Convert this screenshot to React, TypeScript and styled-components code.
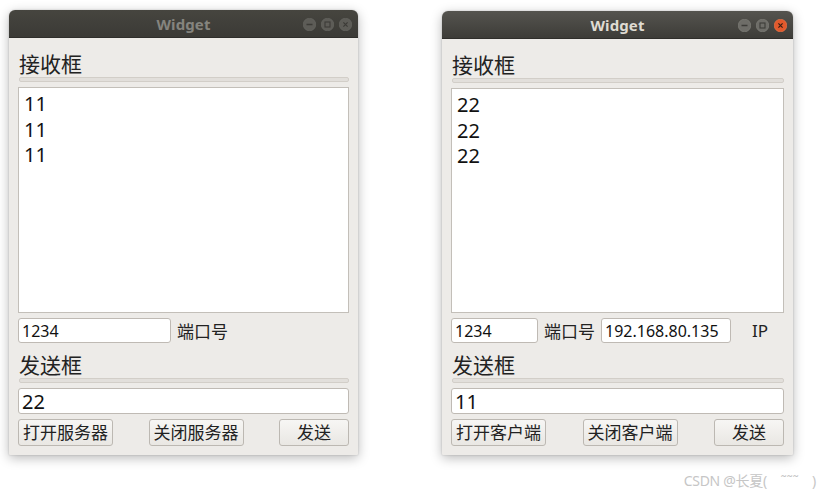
import styled, { createGlobalStyle } from "styled-components";

const GlobalStyle = createGlobalStyle`
  html, body {
    margin: 0;
    padding: 0;
    background: #ffffff;
  }
  * {
    box-sizing: border-box;
  }
`;

const UI_FONT = `"Noto Sans", "Noto Sans CJK SC", sans-serif`;

const Page = styled.div`
  position: relative;
  width: 830px;
  height: 497px;
  overflow: hidden;
  display: flex;
  align-items: flex-start;
  gap: 84px;
  padding: 10px 0 0 9px;
  font-family: ${UI_FONT};
`;

const EdgeGlyph = styled.span`
  position: absolute;
  left: -6px;
  top: 40px;
  font-size: 20px;
  color: #222;
`;

const Window = styled.div<{ $width: number; $height: number; $offset: number }>`
  width: ${(p) => p.$width}px;
  height: ${(p) => p.$height}px;
  margin-top: ${(p) => p.$offset}px;
  display: flex;
  flex-direction: column;
  background: #edebe8;
  border-radius: 6px 6px 1px 1px;
  box-shadow: 0 3px 12px rgba(0, 0, 0, 0.28), 0 0 2px rgba(0, 0, 0, 0.2);
  overflow: hidden;
`;

const TitleBar = styled.div<{ $active: boolean }>`
  height: 28px;
  flex: none;
  display: grid;
  grid-template-columns: 1fr auto 1fr;
  align-items: center;
  padding: 0 6px;
  background: ${(p) =>
    p.$active
      ? "linear-gradient(#55544f, #3d3c38)"
      : "linear-gradient(#46453f, #3b3a36)"};
  border-bottom: 1px solid #2f2e2b;
`;

const Title = styled.div<{ $active: boolean }>`
  grid-column: 2;
  font-family: "Noto Sans", sans-serif;
  font-weight: 700;
  font-size: 15px;
  color: ${(p) => (p.$active ? "#dfdbd2" : "#85847e")};
  letter-spacing: 0.1px;
`;

const Controls = styled.div`
  grid-column: 3;
  justify-self: end;
  display: flex;
  gap: 5px;
  padding-top: 1px;
`;

const Body = styled.div`
  flex: 1;
  display: flex;
  flex-direction: column;
  padding: 14px 9px 9px 9px;
`;

const GroupLabel = styled.div`
  height: 24px;
  line-height: 24px;
  font-size: 21px;
  color: #222;
  padding-left: 1px;
`;

const Divider = styled.div`
  height: 5px;
  margin: 1px 0 5px 1px;
  background: #e2dfdb;
  border: 1px solid #d2cec8;
  border-radius: 2px;
`;

const TextEdit = styled.div`
  flex: 1;
  background: #ffffff;
  border: 1px solid #c3bfb9;
  padding: 3px 5px;
  font-size: 20px;
  line-height: 25.5px;
  color: #111;
`;

const Row = styled.div<{ $gap?: number }>`
  display: flex;
  align-items: center;
  gap: ${(p) => p.$gap ?? 6}px;
  margin-top: 5px;
  margin-bottom: 10px;
`;

const LineEdit = styled.div<{ $width?: number; $big?: boolean }>`
  width: ${(p) => (p.$width ? `${p.$width}px` : "100%")};
  height: ${(p) => (p.$big ? 26 : 25)}px;
  display: flex;
  align-items: center;
  background: #ffffff;
  border: 1px solid #bfbab4;
  border-radius: 3px;
  padding: 0 3px;
  font-size: ${(p) => (p.$big ? 20 : 16)}px;
  color: #111;
  white-space: nowrap;
`;

const FieldLabel = styled.span<{ $shift?: number }>`
  font-size: 17px;
  color: #222;
  margin-left: ${(p) => p.$shift ?? 0}px;
`;

const ButtonRow = styled.div`
  display: flex;
  justify-content: space-between;
  margin-top: 5px;
`;

const Button = styled.button`
  height: 27px;
  min-width: 70px;
  padding: 0 4px;
  font-family: ${UI_FONT};
  font-size: 17px;
  color: #222;
  background: linear-gradient(#f7f6f4, #e9e7e3);
  border: 1px solid #bcb8b2;
  border-radius: 3px;
  line-height: 1;
  cursor: pointer;
`;

const Watermark = styled.span`
  position: absolute;
  right: 14px;
  top: 470px;
  font-family: "Noto Sans", "Noto Sans CJK SC", sans-serif;
  font-size: 14px;
  color: #c6c6c6;
  letter-spacing: -0.3px;
`;

const WinButton = ({ kind, active }: { kind: "min" | "max" | "close"; active: boolean }) => {
  const isClose = kind === "close" && active;
  const fill = isClose ? "#e2592c" : active ? "#6e6d68" : "#5d5c57";
  const ring = isClose ? "#f07a4f" : active ? "#85847e" : "#6a6964";
  const mark = isClose ? "#3a1f14" : active ? "#3d3c38" : "#3c3b37";
  return (
    <svg width="13" height="13" viewBox="0 0 13 13">
      <circle cx="6.5" cy="6.5" r="6.3" fill={fill} stroke={ring} strokeWidth="0.6" />
      {kind === "min" && <line x1="3.5" y1="6.5" x2="9.5" y2="6.5" stroke={mark} strokeWidth="1.3" />}
      {kind === "max" && (
        <rect x="4" y="4" width="5" height="5" fill="none" stroke={mark} strokeWidth="1.1" />
      )}
      {kind === "close" && (
        <path d="M4.4 4.4 L8.6 8.6 M8.6 4.4 L4.4 8.6" stroke={mark} strokeWidth="1.2" />
      )}
    </svg>
  );
};

const TitleRow = ({ active }: { active: boolean }) => (
  <TitleBar $active={active}>
    <Title $active={active}>Widget</Title>
    <Controls>
      <WinButton kind="min" active={active} />
      <WinButton kind="max" active={active} />
      <WinButton kind="close" active={active} />
    </Controls>
  </TitleBar>
);

const ServerWindow = () => (
  <Window $width={349} $height={445} $offset={0}>
    <TitleRow active={false} />
    <Body>
      <GroupLabel>接收框</GroupLabel>
      <Divider />
      <TextEdit>
        <div>11</div>
        <div>11</div>
        <div>11</div>
      </TextEdit>
      <Row>
        <LineEdit $width={153}>1234</LineEdit>
        <FieldLabel>端口号</FieldLabel>
      </Row>
      <GroupLabel>发送框</GroupLabel>
      <Divider />
      <LineEdit $big>22</LineEdit>
      <ButtonRow>
        <Button>打开服务器</Button>
        <Button>关闭服务器</Button>
        <Button>发送</Button>
      </ButtonRow>
    </Body>
  </Window>
);

const ClientWindow = () => (
  <Window $width={351} $height={444} $offset={1}>
    <TitleRow active />
    <Body>
      <GroupLabel>接收框</GroupLabel>
      <Divider />
      <TextEdit>
        <div>22</div>
        <div>22</div>
        <div>22</div>
      </TextEdit>
      <Row>
        <LineEdit $width={87}>1234</LineEdit>
        <FieldLabel>端口号</FieldLabel>
        <LineEdit $width={130}>192.168.80.135</LineEdit>
        <FieldLabel $shift={15}>IP</FieldLabel>
      </Row>
      <GroupLabel>发送框</GroupLabel>
      <Divider />
      <LineEdit $big>11</LineEdit>
      <ButtonRow>
        <Button>打开客户端</Button>
        <Button>关闭客户端</Button>
        <Button>发送</Button>
      </ButtonRow>
    </Body>
  </Window>
);

export default function App() {
  return (
    <>
      <GlobalStyle />
      <Page>
        <EdgeGlyph>)</EdgeGlyph>
        <ServerWindow />
        <ClientWindow />
        <Watermark>CSDN @长夏(　˜˜˜　)</Watermark>
      </Page>
    </>
  );
}
